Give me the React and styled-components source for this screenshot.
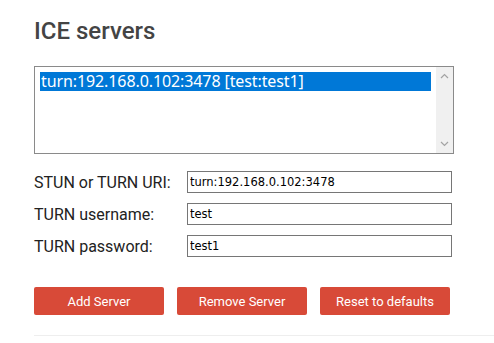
import React from 'react'
import styled, { createGlobalStyle } from 'styled-components'

const GlobalStyle = createGlobalStyle`
  html, body {
    margin: 0;
    padding: 0;
    background: #fff;
  }
  body {
    font-family: Roboto, "Liberation Sans", sans-serif;
    color: #444;
  }
`

const servers = [
  { id: 1, label: 'turn:192.168.0.102:3478 [test:test1]', selected: true },
]

const fields = [
  { label: 'STUN or TURN URI:', value: 'turn:192.168.0.102:3478' },
  { label: 'TURN username:', value: 'test' },
  { label: 'TURN password:', value: 'test1' },
]

const buttons = ['Add Server', 'Remove Server', 'Reset to defaults']

function Chevron({ up }) {
  return (
    <svg width="9" height="6" viewBox="0 0 9 6">
      <path
        d={up ? 'M1 5 L4.5 1.5 L8 5' : 'M1 1 L4.5 4.5 L8 1'}
        fill="none"
        stroke="#a3a3a3"
        strokeWidth="1.2"
      />
    </svg>
  )
}

export default function App() {
  return (
    <>
      <GlobalStyle />
      <StyledSection>
        <StyledTitle>ICE servers</StyledTitle>
        <StyledList>
          <StyledOptions>
            {servers.map((s) => (
              <StyledOption key={s.id} selected={s.selected}>
                {s.label}
              </StyledOption>
            ))}
          </StyledOptions>
          <StyledScrollbar>
            <Chevron up />
            <Chevron />
          </StyledScrollbar>
        </StyledList>
        <StyledForm>
          {fields.map((f) => (
            <StyledRow key={f.label}>
              <StyledLabel>{f.label}</StyledLabel>
              <StyledInput defaultValue={f.value} />
            </StyledRow>
          ))}
        </StyledForm>
        <StyledButtons>
          {buttons.map((b) => (
            <StyledButton key={b}>{b}</StyledButton>
          ))}
        </StyledButtons>
        <StyledDivider />
      </StyledSection>
    </>
  )
}

const StyledSection = styled.div`
  padding: 17px 0 0 34px;
  width: 460px;
`

const StyledTitle = styled.h2`
  margin: 0 0 21px 0;
  font-family: Roboto, sans-serif;
  font-weight: 500;
  font-size: 24px;
  line-height: 28px;
  color: #444;
`

const StyledList = styled.div`
  display: flex;
  width: 420px;
  height: 88px;
  box-sizing: border-box;
  border: 1px solid #8a8a8a;
  background: #fff;
`

const StyledOptions = styled.div`
  flex: 1;
  padding: 5px 5px 0 5px;
`

const StyledOption = styled.div`
  height: 19px;
  line-height: 19px;
  padding-left: 1px;
  font-family: "Noto Sans", "Open Sans", sans-serif;
  font-size: 16px;
  letter-spacing: -0.1px;
  white-space: nowrap;
  color: ${(p) => (p.selected ? '#fff' : '#000')};
  background: ${(p) => (p.selected ? '#0078d7' : 'transparent')};
`

const StyledScrollbar = styled.div`
  width: 17px;
  background: #f0f0f0;
  display: flex;
  flex-direction: column;
  align-items: center;
  justify-content: space-between;
  padding: 6px 0 6px 0;
`

const StyledForm = styled.div`
  display: flex;
  flex-direction: column;
  gap: 10px;
  margin-top: 17px;
`

const StyledRow = styled.div`
  display: flex;
  align-items: center;
  height: 22px;
`

const StyledLabel = styled.label`
  width: 153px;
  font-family: Roboto, sans-serif;
  font-size: 16px;
  color: #222;
`

const StyledInput = styled.input`
  width: 265px;
  height: 22px;
  box-sizing: border-box;
  border: 1px solid #767676;
  border-radius: 0;
  padding: 0 2px;
  font-family: "DejaVu Sans", sans-serif;
  font-size: 11.5px;
  color: #000;
  outline: none;
`

const StyledButtons = styled.div`
  display: flex;
  gap: 13px;
  margin-top: 30px;
`

const StyledButton = styled.button`
  width: 130px;
  height: 28px;
  border: none;
  border-radius: 2px;
  background: #d84a38;
  color: #fff;
  font-family: Roboto, sans-serif;
  font-weight: 400;
  font-size: 13px;
  cursor: pointer;
`

const StyledDivider = styled.div`
  margin-top: 20px;
  border-top: 1px solid #eee;
  width: 460px;
`
